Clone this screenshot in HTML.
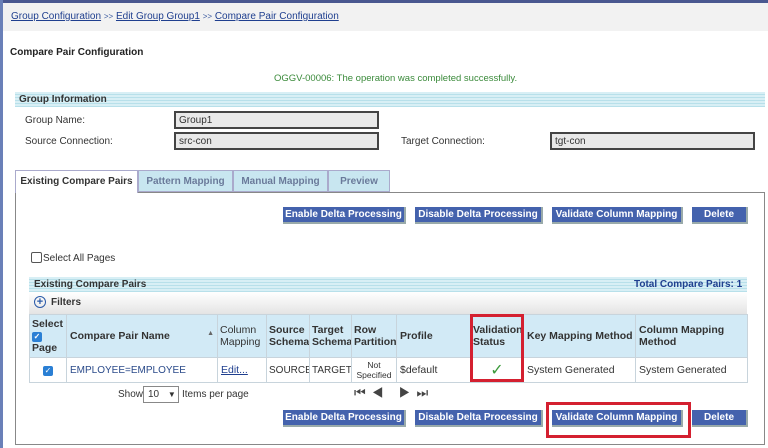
<!DOCTYPE html>
<html><head><meta charset="utf-8"><style>
*{margin:0;padding:0;box-sizing:border-box}
body{width:768px;height:448px;overflow:hidden;background:#fff;font-family:"Liberation Sans",sans-serif;font-size:10px;color:#333;position:relative}
.a{position:absolute;white-space:nowrap}
.lnk{color:#1f3f8f;text-decoration:underline}
.btn{position:absolute;height:17px;background:#4462ad;color:#fff;font-weight:bold;font-size:10px;text-align:center;line-height:15px;white-space:nowrap;border-right:2px solid #9aa;border-bottom:2px solid #9aa}
.inp{position:absolute;height:18px;background:#e9e9e9;border:2px solid #444;padding-left:3px;line-height:15px;font-size:10px}
.strip{background:repeating-linear-gradient(#d8eff5 0 2px,#b8e0ea 2px 3px)}
.tab{position:absolute;top:170px;height:22px;background:#c8e6f0;border:1px solid #aac;color:#6a7a9a;font-weight:bold;text-align:center;line-height:21px;white-space:nowrap}
table{position:absolute;left:29px;top:314px;width:718px;border-collapse:collapse;table-layout:fixed}
td,th{border:1px solid #c8d4dc;padding:2px 3px;font-size:10.5px;overflow:hidden;white-space:nowrap}
th{background:#d2eaf6;text-align:left;font-weight:bold;color:#333;height:43px}
td{height:24px}
.cb{display:inline-block;width:10px;height:10px;background:#2a7fd4;border-radius:2px;color:#fff;font-size:8px;line-height:10px;text-align:center}
.red{position:absolute;border:3px solid #d42030}
</style></head><body>
<div class="a" style="left:0;top:0;width:768px;height:3px;background:#4a5890"></div>
<div class="a" style="left:0;top:3px;width:768px;height:28px;background:#f2f2f2"></div>
<div class="a" style="left:0;top:0;width:3px;height:448px;background:#6a80b8"></div>
<div class="a" style="left:11px;top:11px;font-size:10px"><span class="lnk">Group Configuration</span> <span style="color:#3a5aa0;font-size:8px">&gt;&gt;</span> <span class="lnk">Edit Group Group1</span> <span style="color:#3a5aa0;font-size:8px">&gt;&gt;</span> <span class="lnk">Compare Pair Configuration</span></div>
<div class="a" style="left:10px;top:47px;font-weight:bold;font-size:10px;color:#222">Compare Pair Configuration</div>
<div class="a" style="left:274px;top:73px;color:#3a8a3a;font-size:9.5px">OGGV-00006: The operation was completed successfully.</div>
<div class="a strip" style="left:15px;top:92px;width:750px;height:15px"></div>
<div class="a" style="left:19px;top:94px;font-weight:bold">Group Information</div>
<div class="a" style="left:25px;top:115px">Group Name:</div>
<div class="inp" style="left:174px;top:111px;width:205px">Group1</div>
<div class="a" style="left:25px;top:136px">Source Connection:</div>
<div class="inp" style="left:174px;top:132px;width:205px">src-con</div>
<div class="a" style="left:401px;top:136px">Target Connection:</div>
<div class="inp" style="left:550px;top:132px;width:205px">tgt-con</div>
<div class="a" style="left:15px;top:192px;width:750px;height:253px;border:1px solid #888"></div>
<div class="tab" style="left:15px;width:123px;background:#fff;color:#333;height:23px;border-bottom:none">Existing Compare Pairs</div>
<div class="tab" style="left:138px;width:95px">Pattern Mapping</div>
<div class="tab" style="left:233px;width:95px">Manual Mapping</div>
<div class="tab" style="left:328px;width:62px">Preview</div>
<div class="btn" style="left:283px;top:207px;width:123px">Enable Delta Processing</div>
<div class="btn" style="left:415px;top:207px;width:128px">Disable Delta Processing</div>
<div class="btn" style="left:552px;top:207px;width:131px">Validate Column Mapping</div>
<div class="btn" style="left:692px;top:207px;width:56px">Delete</div>
<div class="a" style="left:31px;top:252px;width:11px;height:11px;border:1px solid #555;border-radius:2px"></div>
<div class="a" style="left:43px;top:253px">Select All Pages</div>
<div class="a strip" style="left:29px;top:277px;width:718px;height:15px"></div>
<div class="a" style="left:34px;top:279px;font-weight:bold">Existing Compare Pairs</div>
<div class="a" style="left:634px;top:279px;font-weight:bold;color:#1f3f8f">Total Compare Pairs: 1</div>
<div class="a" style="left:29px;top:292px;width:718px;height:22px;background:linear-gradient(#fff,#e4e4e4)"></div>
<div class="a" style="left:34px;top:296px;width:12px;height:12px;border:1px solid #2a5aa8;border-radius:50%;color:#2a5aa8;font-size:11px;line-height:10px;text-align:center;font-weight:bold">+</div>
<div class="a" style="left:51px;top:297px;font-weight:bold">Filters</div>
<table>
<colgroup><col style="width:37px"><col style="width:151px"><col style="width:49px"><col style="width:43px"><col style="width:42px"><col style="width:45px"><col style="width:74px"><col style="width:53px"><col style="width:112px"><col style="width:112px"></colgroup>
<tr><th style="padding:1px 2px;line-height:12px">Select<br><span class="cb">✓</span><br>Page</th><th>Compare Pair Name <span style="float:right;font-size:7px;color:#666">▲</span></th><th style="font-weight:normal;line-height:12px;padding:2px">Column<br>Mapping</th><th style="line-height:12px;padding:2px">Source<br>Schema</th><th style="line-height:12px;padding:2px">Target<br>Schema</th><th style="line-height:12px;padding:2px">Row<br>Partition</th><th>Profile</th><th style="line-height:12px;padding:2px">Validation<br>Status</th><th>Key Mapping Method</th><th style="line-height:12px">Column Mapping<br>Method</th></tr>
<tr><td style="text-align:center"><span class="cb">✓</span></td><td style="color:#2a4a8a;font-size:10px">EMPLOYEE=EMPLOYEE</td><td><span class="lnk">Edit...</span></td><td style="padding:2px;font-size:10px">SOURCE</td><td style="padding:2px;font-size:10px">TARGET</td><td style="font-size:8.5px;text-align:center;line-height:10px">Not<br>Specified</td><td>$default</td><td style="text-align:center;color:#3a9a3a;font-size:16px">✓</td><td>System Generated</td><td>System Generated</td></tr>
</table>
<div class="a" style="left:118px;top:389px">Show</div>
<div class="a" style="left:143px;top:386px;width:36px;height:17px;border:1px solid #888;padding-left:4px;line-height:15px">10 <span style="font-size:8px;margin-left:6px">▼</span></div>
<div class="a" style="left:182px;top:389px">Items per page</div>
<div class="a" style="left:354px;top:385px;font-size:13px;color:#444;letter-spacing:6px">⏮◀ ▶⏭</div>
<div class="btn" style="left:283px;top:410px;width:123px">Enable Delta Processing</div>
<div class="btn" style="left:415px;top:410px;width:128px">Disable Delta Processing</div>
<div class="btn" style="left:552px;top:410px;width:131px">Validate Column Mapping</div>
<div class="btn" style="left:692px;top:410px;width:56px">Delete</div>
<div class="red" style="left:470px;top:314px;width:54px;height:68px"></div>
<div class="red" style="left:546px;top:402px;width:145px;height:36px"></div>
</body></html>
